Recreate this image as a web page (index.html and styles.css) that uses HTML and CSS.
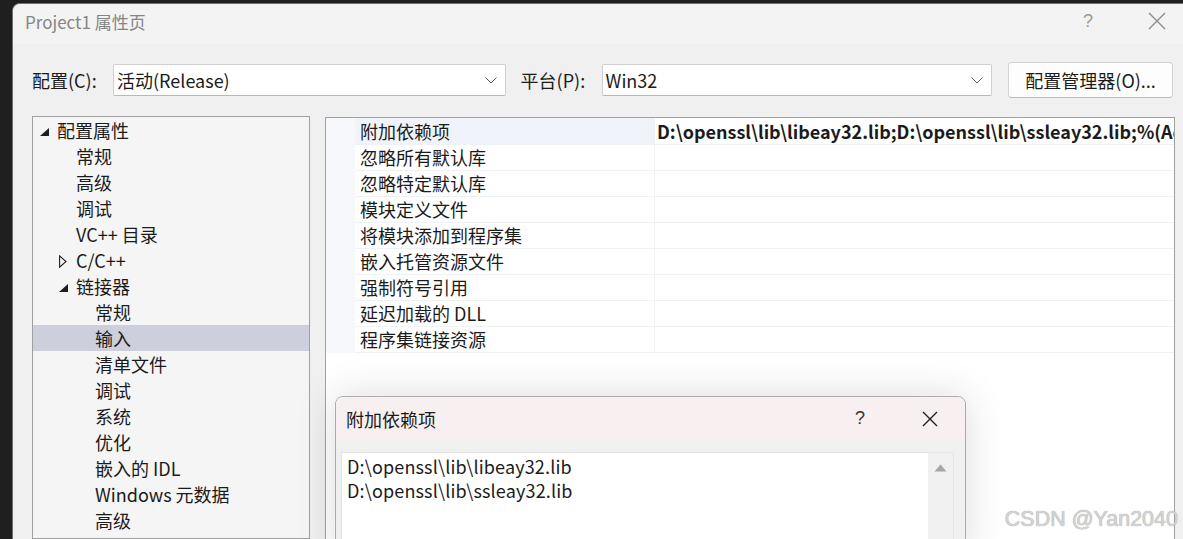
FILE: index.html
```html
<!DOCTYPE html>
<html lang="zh-CN">
<head>
<meta charset="utf-8">
<title>Project1 属性页</title>
<link rel="stylesheet" href="styles.css">
</head>
<body>
<div class="desktop">
  <div class="edge"></div>
  <div class="window">
    <div class="titlebar">
      <span class="title">Project1 属性页</span>
      <span class="tb-help">?</span>
      <span class="tb-close"><svg width="18" height="18" viewBox="0 0 18 18"><path d="M1 1 L17 17 M17 1 L1 17" stroke="#8a8a8a" stroke-width="1.3" fill="none"/></svg></span>
    </div>
    <div class="toolbar">
      <span class="lbl">配置(C):</span>
      <div class="combo combo-cfg"><span>活动(Release)</span><svg class="chev" width="12" height="7" viewBox="0 0 12 7"><path d="M0.5 0.5 L6 6 L11.5 0.5" stroke="#606060" stroke-width="1" fill="none"/></svg></div>
      <span class="lbl lbl-plat">平台(P):</span>
      <div class="combo combo-plat"><span>Win32</span><svg class="chev" width="12" height="7" viewBox="0 0 12 7"><path d="M0.5 0.5 L6 6 L11.5 0.5" stroke="#606060" stroke-width="1" fill="none"/></svg></div>
      <div class="btn">配置管理器(O)...</div>
    </div>
    <div class="content">
      <div class="tree">
        <div class="node l0"><span class="tw"><svg width="9" height="8" viewBox="0 0 9 8"><path d="M9 0 L9 8 L0 8 Z" fill="#1e1e1e"/></svg></span>配置属性</div>
        <div class="node l1"><span class="tw"></span>常规</div>
        <div class="node l1"><span class="tw"></span>高级</div>
        <div class="node l1"><span class="tw"></span>调试</div>
        <div class="node l1"><span class="tw"></span>VC++ 目录</div>
        <div class="node l1"><span class="tw"><svg width="8" height="13" viewBox="0 0 8 13"><path d="M0.6 0.8 L7 6.5 L0.6 12.2 Z" fill="none" stroke="#1e1e1e" stroke-width="1.1"/></svg></span>C/C++</div>
        <div class="node l1"><span class="tw"><svg width="9" height="8" viewBox="0 0 9 8"><path d="M9 0 L9 8 L0 8 Z" fill="#1e1e1e"/></svg></span>链接器</div>
        <div class="node l2"><span class="tw"></span>常规</div>
        <div class="node l2 sel"><span class="tw"></span>输入</div>
        <div class="node l2"><span class="tw"></span>清单文件</div>
        <div class="node l2"><span class="tw"></span>调试</div>
        <div class="node l2"><span class="tw"></span>系统</div>
        <div class="node l2"><span class="tw"></span>优化</div>
        <div class="node l2"><span class="tw"></span>嵌入的 IDL</div>
        <div class="node l2"><span class="tw"></span>Windows 元数据</div>
        <div class="node l2"><span class="tw"></span>高级</div>
        <div class="node l2"><span class="tw"></span>所有选项</div>
      </div>
      <div class="grid">
        <div class="prow first"><span class="gut"></span><span class="pname">附加依赖项</span><span class="pval">D:\openssl\lib\libeay32.lib;D:\openssl\lib\ssleay32.lib;%(AdditionalDependencies)</span></div>
        <div class="prow"><span class="gut"></span><span class="pname">忽略所有默认库</span><span class="pval"></span></div>
        <div class="prow"><span class="gut"></span><span class="pname">忽略特定默认库</span><span class="pval"></span></div>
        <div class="prow"><span class="gut"></span><span class="pname">模块定义文件</span><span class="pval"></span></div>
        <div class="prow"><span class="gut"></span><span class="pname">将模块添加到程序集</span><span class="pval"></span></div>
        <div class="prow"><span class="gut"></span><span class="pname">嵌入托管资源文件</span><span class="pval"></span></div>
        <div class="prow"><span class="gut"></span><span class="pname">强制符号引用</span><span class="pval"></span></div>
        <div class="prow"><span class="gut"></span><span class="pname">延迟加载的 DLL</span><span class="pval"></span></div>
        <div class="prow"><span class="gut"></span><span class="pname">程序集链接资源</span><span class="pval"></span></div>
      </div>
    </div>
  </div>
</div>

<div class="dialog">
  <div class="dlg-title">
    <span class="dlg-name">附加依赖项</span>
    <span class="dlg-help">?</span>
    <span class="dlg-close"><svg width="16" height="16" viewBox="0 0 16 16"><path d="M1 1 L15 15 M15 1 L1 15" stroke="#1e1e1e" stroke-width="1.4" fill="none"/></svg></span>
  </div>
  <div class="dlg-body">
    <div class="editbox">
      <div class="lines">
        <div>D:\openssl\lib\libeay32.lib</div>
        <div>D:\openssl\lib\ssleay32.lib</div>
      </div>
      <div class="vscroll"><svg width="13" height="8" viewBox="0 0 13 8"><path d="M6.5 0.5 L12.5 7.5 L0.5 7.5 Z" fill="#a6a6a6"/></svg></div>
    </div>
  </div>
</div>

<div class="watermark">CSDN @Yan2040</div>
</body>
</html>
```

FILE: styles.css
```css
html, body {
  margin: 0;
  padding: 0;
}
body {
  width: 1183px;
  height: 539px;
  overflow: hidden;
  position: relative;
  background: #1f1f1f;
  font-family: "Noto Sans CJK SC", "Noto Sans", sans-serif;
  font-size: 18px;
  color: #1b1b1b;
}
.desktop {
  display: flex;
  height: 539px;
}
.edge {
  width: 12px;
  flex: none;
  background: #1f1f1f;
}
.window {
  flex: 1;
  margin-top: 3px;
  background: #f0f0f0;
  border-left: 1px solid #6e6e6e;
  border-top: 1px solid #6e6e6e;
  border-top-left-radius: 8px;
  display: flex;
  flex-direction: column;
  overflow: hidden;
}
.titlebar {
  height: 40px;
  flex: none;
  background: #f3f3f3;
  display: flex;
  align-items: center;
  padding-left: 12px;
  padding-bottom: 6px;
  box-sizing: border-box;
}
.title {
  font-size: 17px;
  color: #858585;
  flex: 1;
}
.tb-help {
  color: #9a9a9a;
  font-size: 18px;
  width: 14px;
  margin-right: 51px;
  font-family: "Liberation Sans", sans-serif;
}
.tb-close {
  display: flex;
  margin-right: 17px;
}
.toolbar {
  height: 72px;
  flex: none;
  display: flex;
  align-items: center;
  padding-left: 19px;
  padding-right: 10px;
}
.lbl {
  width: 81px;
  flex: none;
}
.lbl-plat {
  margin-left: 15px;
  width: 81px;
}
.combo {
  height: 30px;
  background: #ffffff;
  border: 1px solid #d0d0d0;
  border-bottom-color: #b8b8b8;
  border-radius: 2px;
  display: flex;
  align-items: center;
  padding-left: 3px;
  padding-right: 8px;
  box-sizing: content-box;
}
.combo span {
  flex: 1;
}
.combo-cfg {
  width: 380px;
}
.combo-plat {
  width: 378px;
}
.btn {
  margin-left: 16px;
  width: 163px;
  height: 34px;
  border: 1px solid #d2d2d2;
  border-bottom-color: #bdbdbd;
  border-radius: 4px;
  background: #fdfdfd;
  display: flex;
  align-items: center;
  justify-content: center;
}
.content {
  flex: 1;
  display: flex;
  gap: 15px;
  padding-left: 19px;
  padding-right: 8px;
  min-height: 0;
}
.tree {
  width: 276px;
  flex: none;
  border: 1px solid #a0a0a0;
  background: #f5f5f5;
  padding-top: 0;
  overflow: hidden;
}
.node {
  height: 26px;
  display: flex;
  align-items: center;
  white-space: nowrap;
}
.node.l0 { padding-left: 5px; }
.node.l1 { padding-left: 24px; }
.node.l2 { padding-left: 43px; }
.node.sel { background: #cdcfdc; }
.tw {
  width: 19px;
  flex: none;
  display: flex;
  align-items: center;
  padding-left: 2px;
  box-sizing: border-box;
  padding-top: 3px;
}
.grid {
  flex: 1;
  margin-top: 1px;
  border: 1px solid #a0a0a0;
  border-bottom: none;
  background: #ffffff;
  overflow: hidden;
}
.prow {
  display: grid;
  grid-template-columns: 29px 300px 1fr;
  height: 26px;
}
.gut {
  background: #f6f8fc;
}
.pname {
  padding-left: 5px;
  border-bottom: 1px solid #eef1f6;
  border-right: 1px solid #eef1f6;
  display: flex;
  align-items: center;
  white-space: nowrap;
}
.prow.first .pname {
  background: #f0f4fa;
}
.pval {
  padding-left: 2px;
  border-bottom: 1px solid #eef1f6;
  display: flex;
  align-items: center;
  white-space: nowrap;
  overflow: hidden;
  font-weight: bold;
}
.dialog {
  position: absolute;
  left: 335px;
  top: 396px;
  width: 629px;
  height: 160px;
  background: #f0f0f0;
  border: 1px solid #acacac;
  border-radius: 8px;
  box-shadow: 0 0 40px rgba(0, 0, 0, 0.14);
  overflow: hidden;
}
.dlg-title {
  height: 43px;
  background: #f7eff0;
  display: flex;
  align-items: center;
  padding-left: 10px;
}
.dlg-name {
  flex: 1;
}
.dlg-help {
  font-family: "Liberation Sans", sans-serif;
  color: #333;
  margin-right: 57px;
}
.dlg-close {
  display: flex;
  margin-right: 27px;
}
.dlg-body {
  padding: 12px 11px 0 5px;
}
.editbox {
  height: 120px;
  background: #ffffff;
  border: 1px solid #e4e4e4;
  display: flex;
}
.lines {
  flex: 1;
  padding-left: 5px;
  padding-top: 1px;
  line-height: 24px;
  letter-spacing: 0.15px;
}
.vscroll {
  width: 25px;
  background: #f0f0f0;
  display: flex;
  justify-content: center;
  padding-top: 11px;
  align-items: flex-start;
}
.watermark {
  position: absolute;
  right: 5px;
  top: 507px;
  font-family: "Liberation Sans", sans-serif;
  font-size: 21.5px;
  color: #d4d4d4;
  text-shadow: 0 0 1px #8c8c8c;
}
```
